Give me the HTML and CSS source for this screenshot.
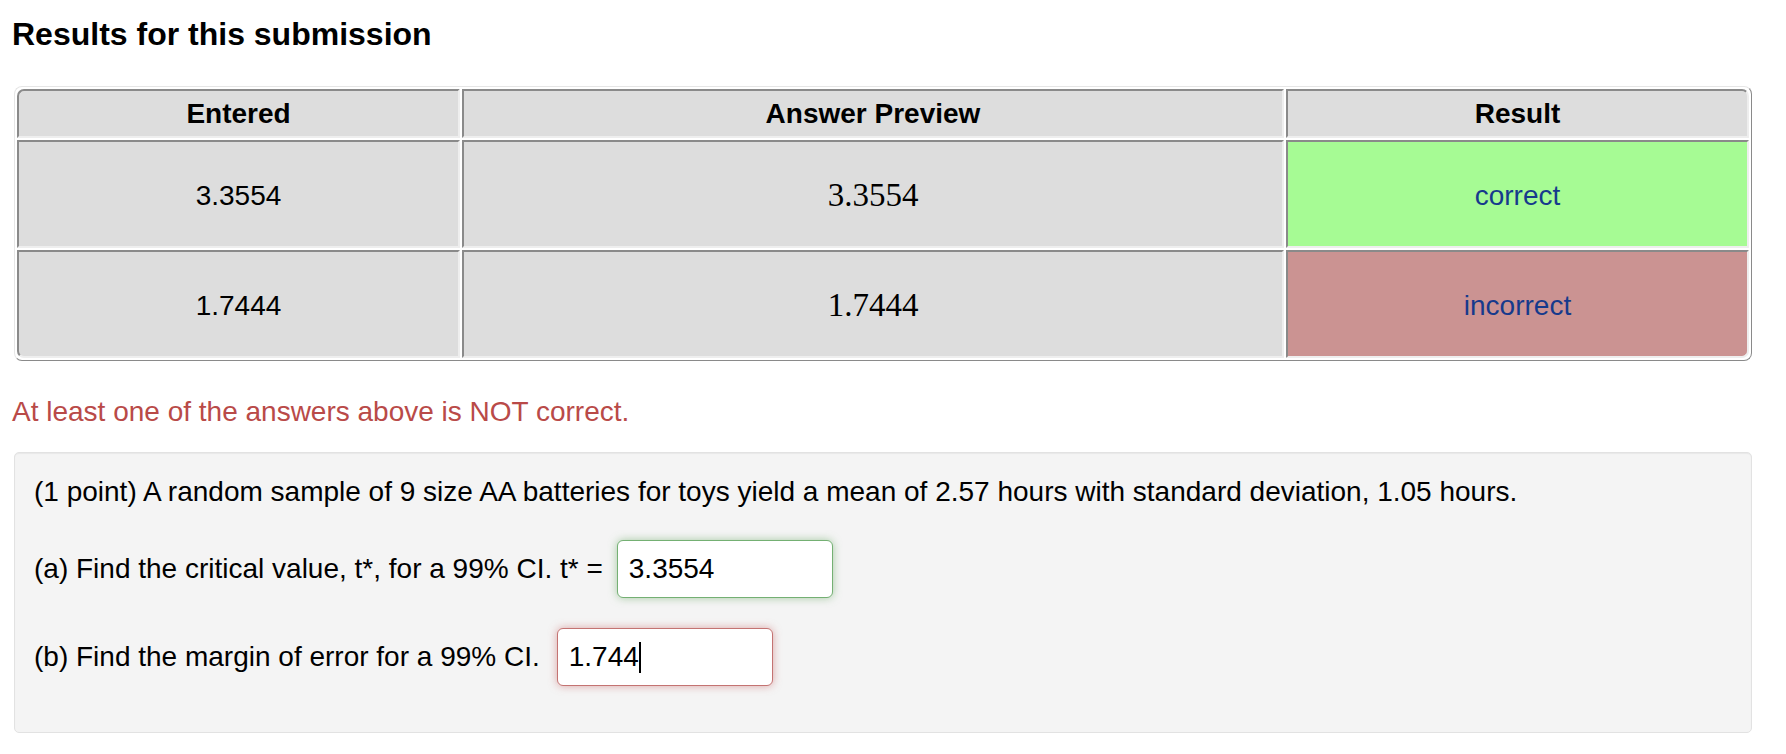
FILE: index.html
```html
<!DOCTYPE html>
<html lang="en">
<head>
    <meta charset="UTF-8">
    <meta name="viewport" content="width=device-width, initial-scale=1.0">
    <title>Results for this submission</title>
    <link rel="stylesheet" href="styles.css">
</head>
<body>
    <div class="page">
        <h2 class="title">Results for this submission</h2>

        <table class="attempt-results">
            <colgroup>
                <col class="col-entered">
                <col class="col-preview">
                <col class="col-result">
            </colgroup>
            <tr>
                <th>Entered</th>
                <th>Answer Preview</th>
                <th>Result</th>
            </tr>
            <tr>
                <td>3.3554</td>
                <td class="preview">3.3554</td>
                <td class="result correct">correct</td>
            </tr>
            <tr>
                <td>1.7444</td>
                <td class="preview">1.7444</td>
                <td class="result incorrect">incorrect</td>
            </tr>
        </table>

        <p class="summary-error">At least one of the answers above is NOT correct.</p>

        <div class="problem">
            <p class="problem-text">(1 point) A random sample of 9 size AA batteries for toys yield a mean of 2.57 hours with standard deviation, 1.05 hours.</p>

            <div class="answer-row">
                <label for="ansA">(a) Find the critical value, t*, for a 99% CI. t* =</label>
                <input type="text" id="ansA" class="answer answer-correct" value="3.3554">
            </div>

            <div class="answer-row answer-row-b">
                <label for="ansB">(b) Find the margin of error for a 99% CI.</label>
                <span class="answer-wrap">
                    <input type="text" id="ansB" class="answer answer-incorrect" value="1.744">
                    <span class="caret"></span>
                </span>
            </div>
        </div>
    </div>
</body>
</html>
```

FILE: styles.css
```css
* {
    margin: 0;
    padding: 0;
    box-sizing: border-box;
}

body {
    font-family: "Liberation Sans", Arial, Helvetica, sans-serif;
    font-size: 28px;
    color: #000;
    background: #fff;
}

.page {
    padding: 0 12px;
}

.title {
    font-size: 32px;
    font-weight: bold;
    line-height: 36px;
    margin: 16px 0 34px 0;
}

/* results table */
.attempt-results {
    width: 1738px;
    margin-left: 2px;
    table-layout: fixed;
    border-collapse: separate;
    border-spacing: 2px;
    border: 1px solid;
    border-color: #e6e6e6 #8a8a8a #8a8a8a #e6e6e6;
    border-radius: 8px;
}

.col-entered { width: 443px; }
.col-preview { width: 822px; }
.col-result { width: 463px; }

.attempt-results th,
.attempt-results td {
    background: #dddddd;
    border: 2px solid;
    border-color: #8a8a8a #eeeeee #eeeeee #8a8a8a;
    text-align: center;
    vertical-align: middle;
    padding: 0 5px;
}

.attempt-results th {
    height: 49px;
    font-weight: bold;
}

.attempt-results td {
    height: 108px;
    padding-top: 3px;
}

.attempt-results tr:first-child th:first-child { border-top-left-radius: 7px; }
.attempt-results tr:first-child th:last-child { border-top-right-radius: 7px; }
.attempt-results tr:last-child td:first-child { border-bottom-left-radius: 7px; }
.attempt-results tr:last-child td:last-child { border-bottom-right-radius: 7px; }

.attempt-results td.preview {
    font-family: "Liberation Serif", "Times New Roman", serif;
    font-size: 33px;
}

.attempt-results td.result {
    color: #163a8c;
}

.attempt-results td.correct {
    background: #a6fb94;
}

.attempt-results td.incorrect {
    background: #cb9392;
}

.summary-error {
    color: #b94a48;
    line-height: 40px;
    margin: 31px 0 20px 0;
}

/* problem well */
.problem {
    width: 1738px;
    margin-left: 2px;
    background: #f4f4f4;
    border: 1px solid #e2e2e2;
    border-radius: 5px;
    box-shadow: inset 0 1px 1px rgba(0,0,0,0.05);
    padding: 19px 19px 46px 19px;
}

.problem-text {
    line-height: 40px;
}

.answer-row {
    display: flex;
    align-items: center;
    gap: 14px;
    height: 58px;
    margin-top: 28px;
    line-height: 40px;
}

.answer-row-b {
    margin-top: 30px;
    gap: 17px;
}

.answer-wrap {
    position: relative;
    display: block;
    height: 58px;
}

.answer {
    display: block;
    width: 216px;
    height: 58px;
    padding: 0 11px;
    font-family: "Liberation Sans", Arial, Helvetica, sans-serif;
    font-size: 28px;
    color: #000;
    background: #fff;
    border: 1px solid;
    border-radius: 6px;
    outline: none;
}

.answer-correct {
    border-color: #74b073;
    box-shadow: 0 0 8px rgba(100,165,95,0.55);
}

.answer-incorrect {
    border-color: #c47372;
    box-shadow: 0 0 8px rgba(200,100,100,0.55);
}

/* text cursor after the typed value */
.caret {
    position: absolute;
    left: 82px;
    top: 14px;
    width: 2px;
    height: 31px;
    background: #000;
}
```
